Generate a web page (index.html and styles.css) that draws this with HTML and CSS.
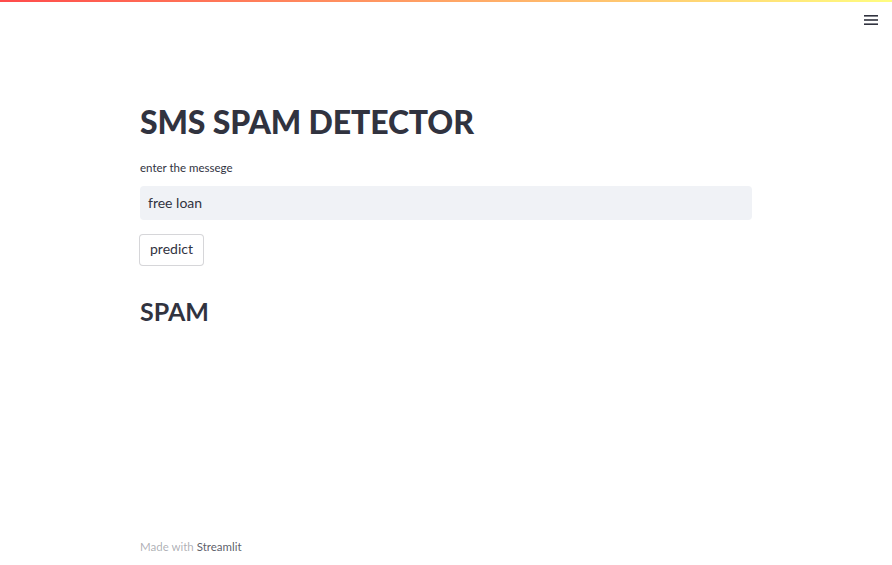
FILE: index.html
```html
<!DOCTYPE html>
<html>
<head>
<meta charset="utf-8">
<link rel="stylesheet" href="styles.css">
</head>
<body>
<div class="topbar"></div>
<header class="header">
  <button class="menu" aria-label="menu">
    <svg width="14" height="10" viewBox="0 0 14 10"><rect x="0" y="0" width="14" height="1.6" fill="#31333f"/><rect x="0" y="4.2" width="14" height="1.6" fill="#31333f"/><rect x="0" y="8.4" width="14" height="1.6" fill="#31333f"/></svg>
  </button>
</header>
<main class="main">
  <div class="block">
    <h1 class="title">SMS SPAM DETECTOR</h1>
    <label class="label">enter the messege</label>
    <div class="input">free loan</div>
    <button class="btn">predict</button>
    <h2 class="result">SPAM</h2>
  </div>
  <footer class="footer">Made with <span class="brand">Streamlit</span></footer>
</main>
</body>
</html>
```
FILE: styles.css
```css
* { box-sizing: border-box; }
html, body { margin: 0; padding: 0; background: #fff; }
body {
  font-family: Lato, "Open Sans", sans-serif;
  color: #31333f;
  width: 892px;
  height: 565px;
  overflow: hidden;
  position: relative;
}
.topbar {
  height: 2px;
  background: linear-gradient(90deg, #ff4b4b, #fffd80);
}
.header {
  display: flex;
  justify-content: flex-end;
  padding: 13px 14px 0 0;
  height: 30px;
}
.menu {
  background: none;
  border: none;
  padding: 0;
  width: 14px;
  height: 10px;
  display: block;
}
.menu svg { display: block; }
.main {
  display: flex;
  flex-direction: column;
  height: 533px;
  padding: 0 140px 0 140px;
}
.block { flex: 1; padding-top: 70px; }
.title {
  margin: 0;
  font-size: 32px;
  font-weight: 900;
  line-height: 40px;
  letter-spacing: -0.15px;
}
.label {
  display: block;
  font-size: 11.5px;
  margin-top: 19px;
  line-height: 14px;
}
.input {
  margin-top: 11px;
  width: 612px;
  height: 34px;
  background: #f0f2f6;
  border-radius: 4px;
  font-size: 14px;
  line-height: 34px;
  padding-left: 8px;
}
.btn {
  margin-top: 14px;
  font-family: inherit;
  color: #31333f;
  font-size: 14px;
  background: #fff;
  border: 1px solid rgba(49,51,63,0.2);
  border-radius: 4px;
  height: 32px;
  padding: 0 10px 3px 10px;
  display: block;
  margin-left: -1px;
}
.result {
  margin: 30px 0 0 0;
  font-size: 25px;
  font-weight: 700;
  line-height: 30px;
}
.footer {
  font-size: 11.5px;
  color: rgba(49,51,63,0.4);
  padding-bottom: 11px;
  line-height: 14px;
}
.brand { color: rgba(49,51,63,0.8); }
```
